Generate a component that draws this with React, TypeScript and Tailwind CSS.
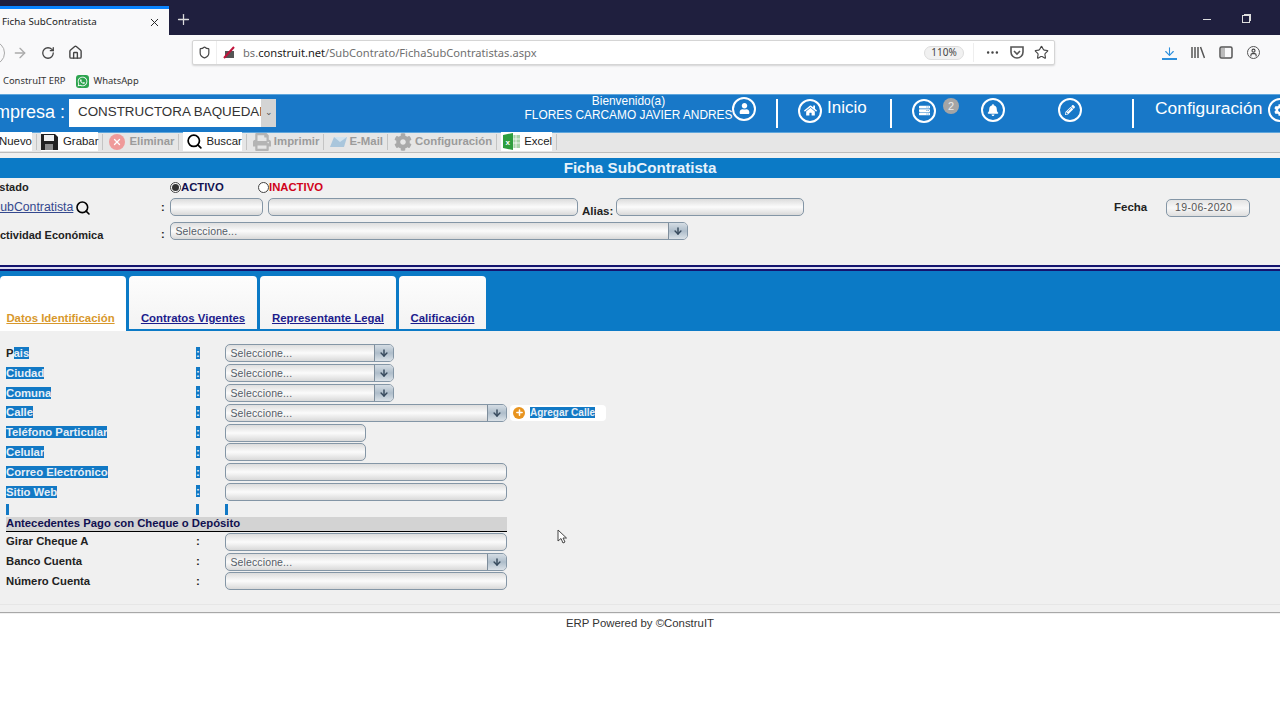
import { ArrowRight, ArrowDown, Home, MoreHorizontal, Plus, RotateCw, Search, Shield, Star, User, X } from 'lucide-react';
import { FaBell, FaCog, FaHome, FaPencilAlt, FaPrint, FaServer, FaUser, FaWhatsapp } from 'react-icons/fa';

const sans = "font-['Liberation_Sans',Arial,sans-serif]";
const chrome = "font-['Noto_Sans','Open_Sans',sans-serif]";

function Field({ w }: { w: string }) {
  return <div className={`${w} h-[18px] shrink-0 rounded-[5px] border-[1.5px] border-[#8496a6] bg-linear-to-b from-[#dcdcdc] via-[#fbfbfb] to-[#d9d9d9]`} />;
}

function Combo({ w }: { w: string }) {
  return (
    <div className={`${w} flex h-[18px] shrink-0 items-stretch overflow-hidden rounded-[5px] border-[1.5px] border-[#8496a6] bg-linear-to-b from-[#dedede] via-[#fbfbfb] to-[#d9d9d9]`}>
      <span className="flex-1 pl-[4.5px] text-[10.5px] font-normal leading-[16px] tracking-[0.12px] text-[#555c66]">Seleccione...</span>
      <span className="flex w-[19px] items-center justify-center border-l border-[#7f8e9c] bg-linear-to-b from-[#d5dde4] via-[#aebdca] to-[#dbe2e8]">
        <ArrowDown size={10} strokeWidth={3.5} className="text-[#36495c]" />
      </span>
    </div>
  );
}

function CircleIcon({ children, className = '' }: { children: React.ReactNode; className?: string }) {
  return <span className={`${className} flex size-[24px] shrink-0 items-center justify-center rounded-full border-2 border-white`}>{children}</span>;
}

function Divider({ ml }: { ml: string }) {
  return <span className={`${ml} h-[29px] w-[2px] shrink-0 bg-white`} />;
}

function Sep() {
  return <span className="h-[16px] w-px shrink-0 bg-[#c4c4c4]" />;
}

function Floppy() {
  return (
    <svg width="17" height="16" viewBox="0 0 17 16" className="shrink-0">
      <path d="M0 0h14l3 3v13H0z" fill="#222" />
      <rect x="3" y="1" width="10" height="6" fill="#f1f1f1" />
      <rect x="4" y="10" width="8" height="6" fill="#8d8d8d" />
    </svg>
  );
}

function Mail() {
  return (
    <svg width="17" height="12" viewBox="0 0 17 12" className="shrink-0">
      <path d="M4 1h13l-3 10H0z" fill="#a9c6dc" />
      <path d="M4 1l6 5 7-5" fill="#d3e3ee" />
    </svg>
  );
}

function ExcelIcon() {
  return (
    <svg width="17" height="17" viewBox="0 0 17 17" className="shrink-0">
      <rect x="8" y="2" width="9" height="13" fill="#a9d3a9" />
      <path d="M10 2v13M13 2v13M8 6h9M8 10h9" stroke="#fff" strokeWidth="0.8" />
      <path d="M0 2l10-2v17L0 15z" fill="#2e9e3e" />
      <text x="2.4" y="12" fontSize="8" fontWeight="700" fill="#fff" fontFamily="Liberation Sans">x</text>
    </svg>
  );
}

function ToolBtn({ children, label, off = false, gap, pl = '' }: { children?: React.ReactNode; label: string; off?: boolean; gap: string; pl?: string }) {
  return (
    <span className={`flex h-[19px] shrink-0 items-center ${gap} ${pl} ${off ? 'font-bold text-[#9b9b9b]' : 'bg-white text-[#222]'}`}>
      {children}
      <span>{label}</span>
    </span>
  );
}

function SelText({ children }: { children: React.ReactNode }) {
  return <span className="bg-[#1279c5] text-[#e6eef6]">{children}</span>;
}

function Row({ label, selected = true, first, children }: { label?: string; selected?: boolean; first?: string; children: React.ReactNode }) {
  return (
    <div className="flex h-[19.8px] items-center">
      <div className="w-[190px] shrink-0 text-[11.3px] font-bold text-[#222]">
        {first}
        {selected ? <SelText>{label}</SelText> : label}
      </div>
      <div className="w-[29px] shrink-0 text-[11.5px] font-bold leading-[13px] text-[#222]">
        {selected ? <SelText>:</SelText> : ':'}
      </div>
      {children}
    </div>
  );
}

function TabItem({ label, w, active = false }: { label: string; w: string; active?: boolean }) {
  return (
    <div className={`${w} flex shrink-0 items-end justify-center rounded-t-[4px] text-[11.4px] font-bold underline ${active ? 'h-[55px] bg-white pb-[4px] pr-[5px] text-[#d8982c]' : 'mb-[2px] h-[53px] bg-linear-to-b from-[#fdfdfd] to-[#f3f3f3] pb-[2px] text-[#1c1c8c]'}`}>
      {label}
    </div>
  );
}

export default function App() {
  return (
    <div className={`${sans} relative h-[720px] w-[1280px] overflow-hidden bg-white`}>
      {/* tab strip */}
      <div className={`${chrome} flex h-[35px] bg-[#1f1f3e] pt-[6px] text-white`}>
        <div className="flex h-[29px] w-[169px] items-center border-t-[3px] border-[#0a84ff] bg-[#f9f9fa] pl-[2px] pr-[8px] text-[9.8px] text-[#222]">
          <span className="flex-1">Ficha SubContratista</span>
          <X size={13} strokeWidth={1.8} />
        </div>
        <Plus size={17} strokeWidth={1.8} className="ml-[6px] mt-[5px] text-[#ddd]" />
        <div className="ml-auto mr-[30px] mt-[7px] flex gap-[31px]">
          <span className="mt-[6px] h-px w-[8px] bg-[#ddd]" />
          <span className="relative mt-[2px] size-[8px] border border-[#ddd]"><span className="absolute -right-[2px] -top-[2px] size-[7px] border-r border-t border-[#ddd]" /></span>
        </div>
      </div>

      {/* nav bar */}
      <div className="flex h-[33px] items-center bg-[#f9f9fa] pt-[2px] text-[#444]">
        <span className="-ml-[19px] size-[24px] shrink-0 rounded-full border border-[#aaa]" />
        <ArrowRight size={16} className="ml-[7px] text-[#aaa]" />
        <RotateCw size={14} strokeWidth={2.2} className="ml-[13px]" />
        <Home size={15} strokeWidth={2.2} className="ml-[13px]" />
        <div className={`${chrome} ml-[109px] flex h-[25px] w-[863px] shrink-0 items-center rounded-[2px] border border-[#d5d5d5] bg-white text-[11.15px] shadow-[0_1px_2px_rgba(0,0,0,0.15)]`}>
          <Shield size={13} strokeWidth={2.2} className="ml-[5px]" />
          <span className="ml-[5px] h-[23px] w-px bg-[#eee]" />
          <svg width="13" height="13" viewBox="0 0 13 13" className="ml-[6px]">
            <rect x="2" y="5" width="9" height="7" fill="#555" />
            <path d="M1 12L11 1" stroke="#c0143c" strokeWidth="2" />
          </svg>
          <span className="ml-[7px] mt-[1px] text-[#6f6f6f]">bs.<span className="text-[#222]">construit.net</span>/SubContrato/FichaSubContratistas.aspx</span>
          <span className="ml-auto flex h-[14px] w-[40px] items-center justify-center rounded-full border border-[#ddd] bg-[#f1f1f1] text-[10px]">110%</span>
          <span className="ml-[9px] h-[19px] w-px bg-[#eee]" />
          <MoreHorizontal size={15} className="ml-[11px]" />
          <svg width="14" height="13" viewBox="0 0 14 13" fill="none" stroke="#555" strokeWidth="1.6" className="ml-[10px]">
            <path d="M1 1h12v5a6 6 0 0 1-12 0z" />
            <path d="M4 5l3 3 3-3" />
          </svg>
          <Star size={15} strokeWidth={1.8} className="ml-[10px] mr-[5px]" />
        </div>
        <ArrowDown size={15} strokeWidth={2} className="ml-[107px] border-b-2 border-[#2c8fdc] text-[#2c8fdc]" />
        <svg width="14" height="13" viewBox="0 0 14 13" fill="none" stroke="#555" strokeWidth="1.5" className="ml-[14px]">
          <path d="M1 1v11M4 1v11M7 1v11M9.5 1l4 11" />
        </svg>
        <svg width="14" height="13" viewBox="0 0 14 13" fill="none" stroke="#555" strokeWidth="1.5" className="ml-[14px]">
          <rect x="1" y="1" width="12" height="11" rx="1.5" />
          <rect x="2" y="2" width="4" height="9" fill="#bbb" stroke="none" />
        </svg>
        <span className="ml-[14px] flex size-[13px] items-center justify-center rounded-full border-[1.5px] border-[#555]">
          <User size={9} strokeWidth={3} />
        </span>
      </div>

      {/* bookmarks */}
      <div className={`${chrome} flex h-[26px] items-center bg-[#f9f9fa] pl-[3px] text-[9.4px] text-[#333]`}>
        <span>ConstruIT ERP</span>
        <span className="ml-[11px] flex size-[13px] items-center justify-center rounded-[3px] bg-[#2ea44f] text-white">
          <FaWhatsapp size={11} />
        </span>
        <span className="ml-[4px]">WhatsApp</span>
      </div>

      {/* app header */}
      <div className="flex h-[39px] items-center border-y border-[#5fa6dc] bg-[#1878c8] text-white">
        <span className="-ml-[17px] mb-[3px] w-[86px] shrink-0 text-[18px] whitespace-nowrap">Empresa :</span>
        <div className="mb-[2px] flex h-[28px] w-[207px] shrink-0 items-center overflow-hidden bg-white text-[13.4px] text-[#333]">
          <span className="w-[192px] shrink-0 overflow-hidden pl-[9px] whitespace-nowrap">CONSTRUCTORA BAQUEDANO</span>
          <span className="flex h-full w-[15px] items-center justify-center bg-[#d4d4d4] text-[9px] text-[#555]">⌄</span>
        </div>
        <div className="mb-[11px] ml-[248px] w-[209px] shrink-0 text-center text-[11.9px] leading-[14px]">
          <div>Bienvenido(a)</div>
          <div className="whitespace-nowrap">FLORES CARCAMO JAVIER ANDRES</div>
        </div>
        <CircleIcon className="mb-[10px] -ml-[1px]"><FaUser size={11} /></CircleIcon>
        <Divider ml="ml-[20px]" />
        <CircleIcon className="mb-[6px] ml-[20px]"><FaHome size={13} /></CircleIcon>
        <span className="mb-[11px] ml-[5px] w-[42px] shrink-0 text-[17px]">Inicio</span>
        <Divider ml="ml-[21px]" />
        <CircleIcon className="mb-[6px] ml-[20px]"><FaServer size={11} /></CircleIcon>
        <span className="mb-[15px] ml-[7px] flex size-[16px] shrink-0 items-center justify-center rounded-full bg-[#a5a5a5] text-[11px] text-[#eee]">2</span>
        <CircleIcon className="mb-[8px] ml-[22px]"><FaBell size={12} /></CircleIcon>
        <CircleIcon className="mb-[8px] ml-[53px]"><FaPencilAlt size={10} /></CircleIcon>
        <Divider ml="ml-[50px]" />
        <span className="mb-[11px] ml-[21px] w-[110px] shrink-0 text-[17.4px] whitespace-nowrap">Configuración</span>
        <CircleIcon className="mb-[8px] ml-[3px]"><FaCog size={12} /></CircleIcon>
      </div>

      {/* toolbar */}
      <div className="flex h-[20px] items-center gap-[4px] border-b border-[#bcbcbc] bg-[#e6e6e6] pb-[2px] text-[11.4px]">
        <span className="-ml-[1px] flex h-[19px] w-[33px] items-center bg-white text-[#222]">Nuevo</span>
        <Sep />
        <ToolBtn label="Grabar" gap="gap-[5px]"><Floppy /></ToolBtn>
        <Sep />
        <ToolBtn label="Eliminar" off gap="gap-[4px]" pl="pl-[2px]">
          <span className="flex size-[16px] items-center justify-center rounded-full bg-[#ef9a9a]"><X size={10} strokeWidth={3} className="text-white" /></span>
        </ToolBtn>
        <Sep />
        <ToolBtn label="Buscar" gap="gap-[3px]" pl="pl-[3px]"><Search size={17} strokeWidth={2.4} className="text-black" /></ToolBtn>
        <Sep />
        <ToolBtn label="Imprimir" off gap="gap-[3px]" pl="pl-[2px]"><FaPrint size={18} className="text-[#b4b4b4]" /></ToolBtn>
        <Sep />
        <ToolBtn label="E-Mail" off gap="gap-[2px]" pl="pl-[2px]"><Mail /></ToolBtn>
        <Sep />
        <ToolBtn label="Configuración" off gap="gap-[3px]" pl="pl-[2px]"><FaCog size={18} className="text-[#a9a9a9]" /></ToolBtn>
        <Sep />
        <ToolBtn label="Excel" gap="gap-[4px]" pl="pl-[2px]"><ExcelIcon /></ToolBtn>
        <Sep />
      </div>

      {/* page */}
      <div className="h-[461px] bg-[#f0f0f0] pt-[5px]">
        <div className="flex h-[20px] items-center justify-center bg-[#0b7ac6] text-[15.2px] font-bold text-[#e8f2fa]">Ficha SubContratista</div>

        <div className="h-[87px] text-[11px] font-bold text-[#222]">
          <div className="flex h-[18px] items-center">
            <span className="-ml-[8px] w-[178px] shrink-0">Estado</span>
            <span className="flex w-[88px] shrink-0 items-center text-[11.3px] text-[#101050]">
              <span className="flex size-[11px] items-center justify-center rounded-full border border-[#444] bg-white"><span className="size-[7px] rounded-full bg-[#333]" /></span>
              ACTIVO
            </span>
            <span className="flex items-center text-[11.3px] text-[#d0021b]">
              <span className="size-[11px] rounded-full border border-[#444] bg-white" />
              INACTIVO
            </span>
          </div>
          <div className="mt-[1px] flex h-[20px] items-center">
            <span className="-ml-[8px] flex w-[169px] shrink-0 items-center pt-[1px]">
              <span className="text-[12.3px] font-normal text-[#34488e] underline">SubContratista</span>
              <Search size={16} strokeWidth={2.4} className="ml-[2px] text-black" />
            </span>
            <span className="w-[9px] shrink-0">:</span>
            <Field w="w-[93px]" />
            <span className="w-[5px] shrink-0" />
            <Field w="w-[310px]" />
            <span className="mt-[9px] w-[38px] shrink-0 pl-[4px] text-[11.5px]">Alias:</span>
            <Field w="w-[188px]" />
            <span className="ml-[310px] w-[52px] shrink-0 pt-[1px] text-[11.5px]">Fecha</span>
            <div className="mt-[1px] flex h-[18px] w-[84px] shrink-0 items-center rounded-[5px] border-[1.5px] border-[#8496a6] bg-linear-to-b from-[#e4e4e4] via-[#f7f7f7] to-[#dedede] pl-[8px] text-[10.5px] font-normal tracking-[0.35px] text-[#555]">19-06-2020</div>
          </div>
          <div className="mt-[4px] flex h-[20px] items-center">
            <span className="-ml-[8px] mt-[8px] w-[169px] shrink-0">Actividad Económica</span>
            <span className="mt-[6px] w-[9px] shrink-0">:</span>
            <Combo w="w-[518px]" />
          </div>
        </div>

        <div className="h-[6px] border-y-2 border-[#14146e] bg-[#dcdcf0]" />

        {/* tabs */}
        <div className="flex h-[60px] items-end gap-[3px] bg-[#0b7ac6]">
          <TabItem label="Datos Identificación" w="w-[126px]" active />
          <TabItem label="Contratos Vigentes" w="w-[128px]" />
          <TabItem label="Representante Legal" w="w-[136px]" />
          <TabItem label="Calificación" w="w-[87px]" />
        </div>

        {/* form */}
        <div className="h-[282px] border-b border-[#a8a8a8]">
          <div className="h-[274px] border-b border-[#e6e6e6] pl-[6px] pt-[12.5px]">
            <Row label="ais" first="P"><Combo w="w-[169px]" /></Row>
            <Row label="Ciudad"><Combo w="w-[169px]" /></Row>
            <Row label="Comuna"><Combo w="w-[169px]" /></Row>
            <Row label="Calle">
              <Combo w="w-[282px]" />
              <span className="ml-[3px] flex h-[16px] w-[96px] items-center rounded-[4px] bg-white pl-[3px] text-[10px] font-bold">
                <span className="flex size-[12px] items-center justify-center rounded-full bg-[#e8941f]"><Plus size={9} strokeWidth={4} className="text-white" /></span>
                <span className="ml-[5px]"><SelText>Agregar Calle</SelText></span>
              </span>
            </Row>
            <Row label="Teléfono Particular"><Field w="w-[141px]" /></Row>
            <Row label="Celular"><Field w="w-[141px]" /></Row>
            <Row label="Correo Electrónico"><Field w="w-[282px]" /></Row>
            <Row label="Sitio Web"><Field w="w-[282px]" /></Row>
            <div className="flex h-[15px] items-center">
              <span className="h-[11px] w-[3px] bg-[#1279c5]" />
              <span className="ml-[187px] h-[11px] w-[3px] bg-[#1279c5]" />
              <span className="ml-[26px] h-[11px] w-[3px] bg-[#1279c5]" />
            </div>
            <div className="flex h-[15px] w-[501px] items-center border-b border-black bg-[#d3d3d3] text-[11.3px] font-bold text-[#101050]">Antecedentes Pago con Cheque o Depósito</div>
            <Row label="Girar Cheque A" selected={false}><Field w="w-[282px]" /></Row>
            <Row label="Banco Cuenta" selected={false}><Combo w="w-[282px]" /></Row>
            <Row label="Número Cuenta" selected={false}><Field w="w-[282px]" /></Row>
          </div>
        </div>
      </div>

      <div className="pt-[1px] text-center text-[11.4px] text-[#333]">ERP Powered by ©ConstruIT</div>

      {/* mouse pointer */}
      <svg width="10" height="15" viewBox="0 0 10 15" className="absolute left-[557px] top-[529px]">
        <path d="M1 1v11l3-2.5 2 4.5 2-1-2-4h3.5z" fill="#fff" stroke="#444" strokeWidth="1" />
      </svg>
    </div>
  );
}
